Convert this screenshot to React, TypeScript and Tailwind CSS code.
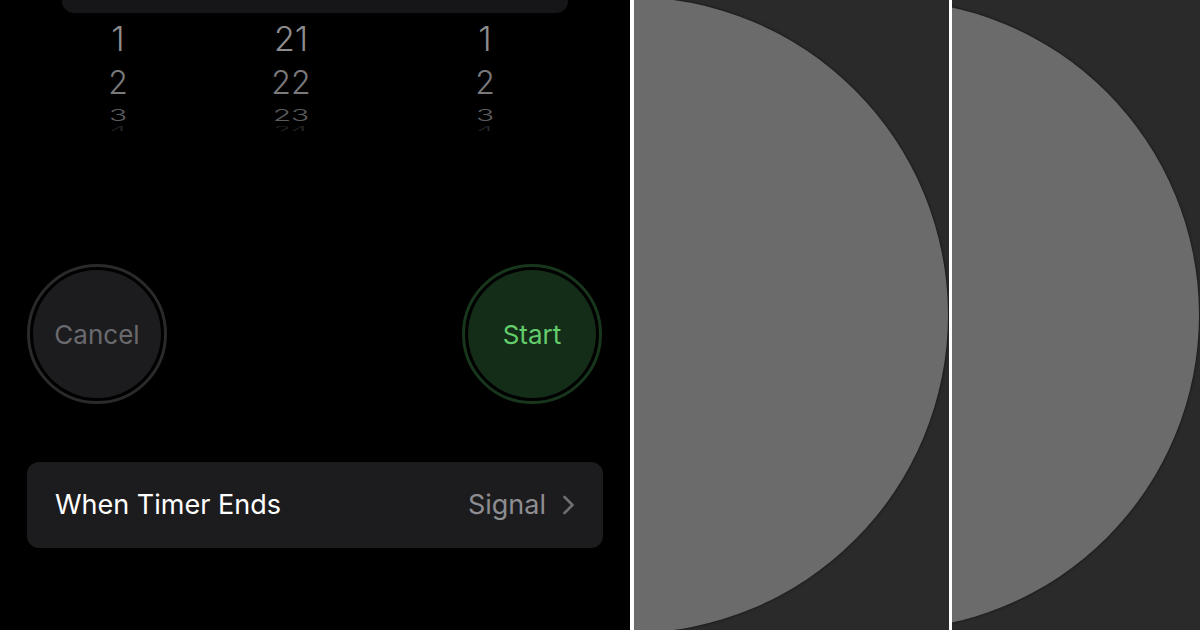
import React from 'react';

const font = { fontFamily: 'Inter, "Noto Sans", "Liberation Sans", sans-serif' };

const columns = [
    { values: ['1', '2', '3', '4'], width: 'w-[80px]', gap: 'ml-[78px]' },
    { values: ['21', '22', '23', '24'], width: 'w-[80px]', gap: 'ml-[93px]' },
    { values: ['1', '2', '3', '4'], width: 'w-[80px]', gap: 'ml-[114px]' },
];

const PickerColumn: React.FC<{ values: string[]; className: string }> = ({ values, className }) => (
    <div className={`flex flex-col items-center ${className}`}>
        <div className="h-[40px] flex items-end justify-center text-[34px] leading-none font-light text-[#8c8c8e] pb-[4px]">
            {values[0]}
        </div>
        <div className="h-[46px] flex items-center justify-center text-[32px] leading-none font-light text-[#7a7a7c]">
            {values[1]}
        </div>
        <div className="h-[18px] flex items-center justify-center text-[30px] leading-none font-light text-[#5c5c5e] scale-y-[0.55]">
            {values[2]}
        </div>
        <div className="h-[7px] overflow-hidden flex items-start justify-center">
            <span className="text-[28px] leading-none font-light text-[#262628] scale-y-[0.3] -mt-[8px]">
                {values[3]}
            </span>
        </div>
    </div>
);

const RoundButton: React.FC<{ label: string; ring: string; fill: string; text: string }> = ({ label, ring, fill, text }) => (
    <div className={`w-[140px] h-[140px] rounded-full border-[3px] ${ring} flex items-center justify-center`}>
        <div className={`w-[128px] h-[128px] rounded-full ${fill} flex items-center justify-center`}>
            <span className={`text-[26px] ${text}`}>{label}</span>
        </div>
    </div>
);

const TimerPanel: React.FC = () => (
    <div className="w-[630px] h-[630px] shrink-0 bg-black flex flex-col overflow-hidden" style={font}>
        <div className="ml-[62px] w-[506px] h-[13px] rounded-b-[12px] bg-[#161618]" />

        <div className="flex mt-[7px]">
            {columns.map((col, i) => (
                <PickerColumn key={i} values={col.values} className={`${col.width} ${col.gap}`} />
            ))}
        </div>

        <div className="flex justify-between ml-[27px] mr-[28px] mt-[133px]">
            <RoundButton label="Cancel" ring="border-[#2a2a2c]" fill="bg-[#1c1c1e]" text="text-[#6a6a6e]" />
            <RoundButton label="Start" ring="border-[#17361c]" fill="bg-[#142d18]" text="text-[#63cc6b]" />
        </div>

        <div className="ml-[27px] w-[576px] h-[86px] mt-[58px] rounded-[12px] bg-[#1c1c1e] flex items-center justify-between pl-[28px] pr-[28px]">
            <span className="text-[27px] text-white">When Timer Ends</span>
            <div className="flex items-center gap-[16px]">
                <span className="text-[27px] text-[#8d8d92]">Signal</span>
                <svg width="13" height="20" viewBox="0 0 13 20" fill="none">
                    <path d="M2.5 2 L10.5 10 L2.5 18" stroke="#6d6d72" strokeWidth="2.6" strokeLinecap="round" strokeLinejoin="round" />
                </svg>
            </div>
        </div>
    </div>
);

const CirclePanel: React.FC<{ className: string; circle: string }> = ({ className, circle }) => (
    <div className={`h-[630px] bg-[#2a2a2a] overflow-hidden flex items-center ${className}`}>
        <div className={`shrink-0 rounded-full bg-[#6b6b6b] shadow-[0_0_3px_rgba(0,0,0,0.7)] ${circle}`} />
    </div>
);

const App: React.FC = () => {
    return (
        <div className="w-[1200px] h-[630px] bg-white flex overflow-hidden">
            <TimerPanel />
            <CirclePanel className="ml-[4px] w-[315px] shrink-0" circle="w-[636px] h-[636px] ml-[-322px]" />
            <CirclePanel className="ml-[3px] flex-1" circle="w-[630px] h-[630px] ml-[-383px]" />
        </div>
    );
};

export default App;
